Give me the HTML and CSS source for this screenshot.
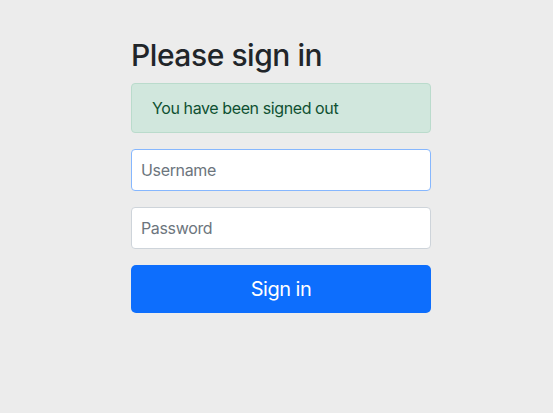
FILE: index.html
```html
<!DOCTYPE html>
<html lang="en">
<head>
<meta charset="utf-8">
<title>Please sign in</title>
<link rel="stylesheet" href="styles.css">
</head>
<body>
<div class="content">
  <form class="login-form">
    <h2 class="heading">Please sign in</h2>
    <div class="alert">You have been signed out</div>
    <input class="field focused" type="text" placeholder="Username">
    <input class="field" type="password" placeholder="Password">
    <button class="primary" type="button">Sign in</button>
  </form>
</div>
</body>
</html>
```
FILE: styles.css
```css
html, body {
  margin: 0;
  height: 100%;
}
body {
  background: #ececec;
  font-family: Inter, "Noto Sans", sans-serif;
  color: #212529;
}
.content {
  display: flex;
  justify-content: center;
  padding-top: 36px;
}
.login-form {
  width: 300px;
  display: flex;
  flex-direction: column;
  margin-left: 9px;
}
.heading {
  margin: 0 0 9px 0;
  font-size: 30px;
  font-weight: 500;
  line-height: 38px;
  letter-spacing: -0.45px;
}
.alert {
  box-sizing: border-box;
  height: 50px;
  padding: 0 20px;
  display: flex;
  align-items: center;
  background: #d1e7dd;
  border: 1px solid #badbcc;
  border-radius: 4px;
  color: #0f5132;
  font-size: 16px;
  letter-spacing: -0.4px;
  margin-bottom: 16px;
}
.field {
  box-sizing: border-box;
  height: 42px;
  padding: 0 9px;
  border: 1px solid #ced4da;
  border-radius: 4px;
  background: #fff;
  font-family: inherit;
  font-size: 16px;
  letter-spacing: -0.35px;
  color: #212529;
  margin: 0 0 16px 0;
  outline: none;
}
.field::placeholder {
  color: #6c757d;
}
.field.focused {
  border-color: #86b7fe;
}
.primary {
  box-sizing: border-box;
  height: 48px;
  border: none;
  border-radius: 5px;
  background: #0d6efd;
  color: #fff;
  font-family: inherit;
  font-size: 20px;
  font-weight: 400;
  letter-spacing: -0.5px;
  cursor: pointer;
}
```
